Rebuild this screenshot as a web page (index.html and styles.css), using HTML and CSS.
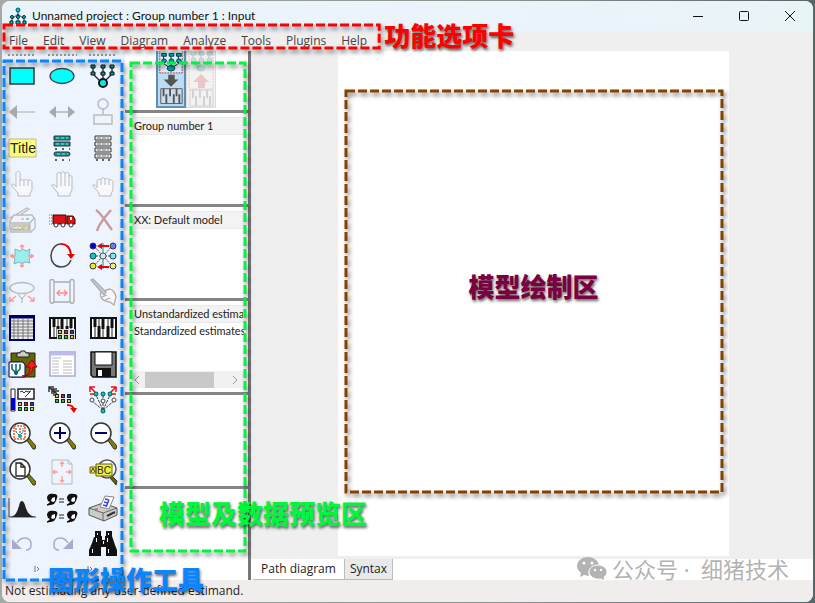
FILE: index.html
```
<!DOCTYPE html>
<html lang="en">
<head>
    <meta charset="utf-8">
    <title>Unnamed project : Group number 1 : Input</title>
    <link rel="stylesheet" href="styles.css">
</head>
<body>
    <!-- shared icon parts -->
    <svg class="sprite" aria-hidden="true">
        <symbol id="net" viewBox="0 0 28 28">
            <path d="M4 4v8l8 8M14 4v14M23 4v8l-8 8" fill="none" stroke="#222" stroke-width="1.3"/>
            <g fill="#099" stroke="#111"><path d="M2 3h4v3H2zM12 3h4v3h-4zM21 3h4v3h-4zM2 10h4v3H2zM12 10h4v3h-4zM21 10h4v3h-4z"/></g>
            <circle cx="14" cy="21" r="4" fill="#0ee" stroke="#111" stroke-width="2"/>
        </symbol>
        <symbol id="keys" viewBox="0 0 28 28">
            <path d="M2 4h25v20H2z" fill="#fff" stroke="#111" stroke-width="2"/>
            <path d="M6 4v20M10 4v20M14 4v20M19 4v20M23 4v20" stroke="#222"/>
            <path d="M6 4v9M10 12v11M14 4v11M19 12v11M23 4v10" stroke="#111" stroke-width="3"/>
        </symbol>
        <symbol id="lens" viewBox="0 0 28 28">
            <path d="M18 17l2-2 8 9-1 3h-2z" fill="#808000" stroke="#333"/>
            <circle cx="12" cy="11" r="10" fill="#fff" stroke="#333" stroke-width="1.5"/>
        </symbol>
        <symbol id="chips" viewBox="0 0 16 9">
            <path d="M0 0h4v4H0zM6 0h4v4H6zM12 0h4v4h-4zM0 5h4v4H0zM6 5h4v4H6zM12 5h4v4h-4z" fill="#222"/>
            <path d="M1 1h2v2H1zM13 6h2v2h-2z" fill="#dd0"/><path d="M7 1h2v2H7z" fill="#f11"/><path d="M13 1h2v2h-2z" fill="#33e"/><path d="M1 6h2v2H1zM7 6h2v2H7z" fill="#2c2"/>
        </symbol>
        <symbol id="face" viewBox="0 0 12 13">
            <path d="M1 5c0-4 4-5 7-4 3 0 4 2 3 4l-1 3-2 3-3 1-3-1 2-2-2-1z" fill="#111"/>
            <path d="M6 5l3-1v4L7 9 5 8z" fill="#fff"/><path d="M1 12l4-1" stroke="#111" stroke-width="1.5"/>
        </symbol>
    </svg>

    <div class="window">
        <header class="titlebar">
            <svg class="app-icon" viewBox="0 0 18 18">
                <path d="M9 4v10M9 7L3 12v3M9 7l6 5v3" fill="none" stroke="#246" stroke-width="1"/>
                <circle cx="9" cy="3" r="2" fill="#0cc" stroke="#056"/>
                <g fill="#0cc" stroke="#023"><circle cx="3" cy="10" r="1.5"/><circle cx="9" cy="10" r="1.5"/><circle cx="15" cy="10" r="1.5"/><path d="M1 14h3v3H1zM7 14h4v3H7zM14 14h3v3h-3z"/></g>
            </svg>
            <h1 class="title">Unnamed project : Group number 1 : Input</h1>
            <div class="window-controls">
                <button aria-label="Minimize"><svg viewBox="0 0 12 12"><path d="M1 6.500h10"/></svg></button>
                <button aria-label="Maximize"><svg viewBox="0 0 12 12"><rect x="1.500" y="1.500" width="9" height="9" rx="1"/></svg></button>
                <button aria-label="Close"><svg viewBox="0 0 12 12"><path d="M1 1l10 10M11 1L1 11"/></svg></button>
            </div>
        </header>

        <div class="menubar">
            <nav class="menu">
                <button>File</button>
                <button>Edit</button>
                <button>View</button>
                <button>Diagram</button>
                <button>Analyze</button>
                <button>Tools</button>
                <button>Plugins</button>
                <button>Help</button>
                <svg class="mark mark-menu"><rect width="100%" height="100%"/></svg>
                <span class="note note-menu" lang="zh">功能选项卡</span>
            </nav>
        </div>

        <main class="workspace">
            <section class="tools">
                <div class="grips"><i></i><i></i><i></i></div>
                <div class="tool-grid">
                    <button aria-label="Observed variable"><svg viewBox="0 0 28 28"><path d="M2 6h24v16H2z" fill="#0ff" stroke="#333" stroke-width="1.500"/></svg></button>
                    <button aria-label="Unobserved variable"><svg viewBox="0 0 28 28"><ellipse cx="14" cy="14" rx="12" ry="7.500" fill="#0ff" stroke="#444" stroke-width="1.300"/></svg></button>
                    <button aria-label="Latent variable"><svg><use href="#net"/></svg></button>

                    <button aria-label="Path"><svg viewBox="0 0 28 28"><path d="M8 14h19" stroke="#aaa"/><path d="M1 14l8-7v14z" fill="#aaa"/></svg></button>
                    <button aria-label="Covariance"><svg viewBox="0 0 28 28"><path d="M7 14h14" stroke="#999"/><path d="M1 14l7-6v12zM27 14l-7-6v12z" fill="#aaa"/></svg></button>
                    <button aria-label="Unique variable"><svg viewBox="0 0 28 28" fill="none" stroke="#bbb" stroke-width="1.500"><circle cx="14" cy="6" r="5"/><path d="M14 11v6M5 17h18v9H5z"/></svg></button>

                    <button aria-label="Figure captions"><svg viewBox="0 0 28 28"><path d="M1 5h27v18H1z" fill="#ff7" stroke="#bb9"/><text x="2" y="19" font-size="14" fill="#222">Title</text></svg></button>
                    <button aria-label="Variables in model"><svg viewBox="0 0 28 28"><g fill="#099" stroke="#333"><path d="M6 2h16v4H6zM6 8h16v4H6z"/><rect x="6" y="18" width="16" height="4" rx="2"/></g><path d="M8 4h12M8 10h12M9 20h11" stroke="#9dd" stroke-dasharray="3 2"/><path d="M7 15h15M7 26h15" stroke="#333" stroke-width="1.500" stroke-dasharray="2 5"/></svg></button>
                    <button aria-label="Variables in data set"><svg viewBox="0 0 28 28"><path d="M6 2h16v4H6zM6 8h16v4H6zM6 14h16v4H6zM6 20h16v4H6z" fill="#eee" stroke="#333"/><path d="M8 4h12M8 10h12M8 16h12M8 22h12" stroke="#777" stroke-dasharray="4 1"/><path d="M7 26h15" stroke="#333" stroke-width="1.500" stroke-dasharray="2 4"/></svg></button>

                    <button aria-label="Select one"><svg viewBox="0 0 28 28" class="hand"><path d="M8 17V3c0-2 4-2 4 0v8c0-2 4-2 4 0 0-2 4-2 4 0 0-2 4-1 4 1v8l-2 4v2H10v-3l-6-7c-1-2 1-3 4 0M12 11v5M16 11v5M20 11v5"/></svg></button>
                    <button aria-label="Select all"><svg viewBox="0 0 28 28" class="hand"><path d="M9 18V4c0-2 4-2 4 0 0-3 4-3 4 0 0-2 4-2 4 0v2c2-1 3 0 3 2v12l-2 4v2H10v-3l-6-7c-1-2 2-2 5 1M13 4v12M17 4v12M21 5v11"/></svg></button>
                    <button aria-label="Deselect all"><svg viewBox="0 0 28 28" class="hand"><path d="M8 18v-7c0-2 4-2 4-1 0-3 4-3 4 0 0-2 4-2 4 0 0-1 4 0 4 2v8l-2 4v2H10v-3l-6-7c-1-2 1-2 4 1M12 10v5M16 10v5M20 10v5"/></svg></button>

                    <button aria-label="Duplicate"><svg viewBox="0 0 28 28" fill="none" stroke="#bbb" stroke-width="1.300"><path d="M2 12L19 2l2 1-9 6M2 15l4-6h18l3 4v9l-4 4H3l-1-4zM2 17h20l4-5M22 17v8"/><path d="M4 19h17v5H4z" fill="#eed"/><text x="5" y="24" font-size="6" fill="#996" stroke="none">COPY</text><path d="M13 13h3" stroke="#faa"/><path d="M18 13h3" stroke="#6c9"/></svg></button>
                    <button aria-label="Move"><svg viewBox="0 0 28 28"><path d="M5 9h13v9H5zM19 10h6l2 3v5h-8z" fill="#d11" stroke="#400"/><path d="M1 9h3M1 12h3M1 15h3M1 18h3" stroke="#c44" stroke-dasharray="1 1"/><g fill="#fff" stroke="#333"><circle cx="8" cy="19" r="2"/><circle cx="15" cy="19" r="2"/><circle cx="23" cy="19" r="2"/></g><path d="M22 11h2v3h-2z" fill="#fff"/></svg></button>
                    <button aria-label="Erase"><svg viewBox="0 0 28 28" fill="none" stroke="#c99ba0"><path d="M7 4c5 3 10 12 16 20" stroke-width="2.500"/><path d="M22 4C17 10 10 17 8 25" stroke-width="2.500"/></svg></button>

                    <button aria-label="Change shape"><svg viewBox="0 0 28 28"><path d="M7 7l5 2 3-2 3 2 4-2-1 5 2 3-2 2 1 4-5-1-3 2-3-2-5 2 1-5-2-2 2-2z" fill="#9ee" stroke="#7bb"/><g stroke="#f99" stroke-width="1.500" fill="none"><path d="M14 8V3M12 5l2-2 2 2M14 20v5M12 23l2 2 2-2M8 14H2M5 12l-2 2 2 2M20 14h6M23 12l2 2-2 2"/></g></svg></button>
                    <button aria-label="Rotate"><svg viewBox="0 0 28 28" fill="none" stroke-width="1.500"><path d="M23 18c-2 5-5 7-10 7-6 0-10-5-10-11S7 2 13 2" stroke="#444"/><path d="M13 2c6 0 9 4 10 10" stroke="#e00" stroke-width="2"/><path d="M19 12h8l-4 5z" fill="#e00"/></svg></button>
                    <button aria-label="Reflect"><svg viewBox="0 0 28 28"><path d="M4 3l20 22M4 25L24 3M4 14h20" stroke="#555" stroke-dasharray="2 1"/><path d="M14 1v26" stroke="#099"/><path d="M20 4h-8M20 25h-8" stroke="#e00" stroke-width="2"/><path d="M8 4l5-3v6zM8 25l5-3v6z" fill="#e00"/><circle cx="14" cy="14" r="3" fill="#cee" stroke="#555"/><g stroke="#335"><circle cx="4" cy="4" r="3" fill="#00d"/><circle cx="4" cy="14" r="3" fill="#0cc"/><circle cx="4" cy="24" r="3" fill="#ee0"/><circle cx="24" cy="4" r="3" fill="#77e"/><circle cx="24" cy="14" r="3" fill="#7ee"/><circle cx="24" cy="24" r="3" fill="#ee7"/></g></svg></button>

                    <button aria-label="Move parameter"><svg viewBox="0 0 28 28" fill="none"><ellipse cx="14" cy="10" rx="12" ry="5.500" stroke="#bbb" stroke-width="1.300"/><path d="M10 16l4 5 4-5M14 21v4" stroke="#aaa"/><path d="M8 18l-6 5M2 19v4h4M20 18l6 5M26 19v4h-4" stroke="#f99" stroke-width="1.300"/></svg></button>
                    <button aria-label="Reposition diagram"><svg viewBox="0 0 28 28" fill="none" stroke="#aaa" stroke-width="1.300"><path d="M6 4h16M5 24h18M2 3c0-2 4-2 4 0v20c0 3-4 3-4 0zM22 3c0-2 4-2 4 0v20c0 3-4 3-4 0z"/><path d="M10 15h8M12 12l-3 3 3 3M16 12l3 3-3 3" stroke="#f88"/></svg></button>
                    <button aria-label="Touch up"><svg viewBox="0 0 28 28" stroke="#aaa" stroke-width="1.300"><path d="M12 14c-2 3 0 7 4 9l5 1 4 3 2-8c0-3-3-7-6-8l-4 1z" fill="#f8f8fa"/><path d="M2 2l2-1 13 13-2 3z" fill="#ccc"/><path d="M13 19l5-2M16 22l5-2" fill="none"/></svg></button>

                    <button aria-label="Select data files"><svg viewBox="0 0 28 28"><path d="M2 2h24v24H2z" fill="#eee" stroke="#006" stroke-width="2"/><path d="M1 3h26" stroke="#006" stroke-width="3"/><path d="M3 7h22M3 10h22M3 13h22M3 16h22M3 19h22M3 22h22M6 5v20M10 5v20M15 5v20M20 5v20" stroke="#777"/></svg></button>
                    <button aria-label="Analysis properties"><svg viewBox="0 0 28 28"><use href="#keys" width="28" height="28"/><path d="M9 15h18v11H9z" fill="#ddd"/><use href="#chips" x="10" y="16" width="16" height="9"/></svg></button>
                    <button aria-label="Calculate estimates"><svg><use href="#keys"/></svg></button>

                    <button aria-label="Copy diagram"><svg viewBox="0 0 28 28"><path d="M3 3h24v24H3z" fill="#660" stroke="#222"/><path d="M9 3h3l1-2h4l1 2h3v4H9z" fill="#ccc" stroke="#222"/><path d="M1 12h14l2 3v12H1z" fill="#fff" stroke="#006"/><path d="M4 14v5l4 4 4-4v-5M8 14v8" fill="none" stroke="#066" stroke-width="1.500"/><circle cx="8" cy="23" r="2" fill="#066"/><path d="M14 26c6 0 8-3 8-9h-4l6-7 5 7h-4c0 6-4 10-11 9z" fill="#e22" stroke="#900"/></svg></button>
                    <button aria-label="View text"><svg viewBox="0 0 28 28"><path d="M2 2h25v24H2z" fill="#fff" stroke="#aac" stroke-width="1.500"/><path d="M3 4h23" stroke="#bbe" stroke-width="3"/><path d="M4 8h9M4 11h7M15 11h9M4 14h7M15 14h9M4 17h7M15 17h9M4 20h7M15 20h9M4 23h7M15 23h9" stroke="#bbb"/></svg></button>
                    <button aria-label="Save"><svg viewBox="0 0 28 28"><path d="M2 2h25v25H4l-2-2z" fill="#777" stroke="#111" stroke-width="1.500"/><path d="M6 2h17v13H6z" fill="#fff" stroke="#111"/><path d="M7 18h15v9H7z" fill="#111"/><path d="M9 20h4v6H9z" fill="#fff"/></svg></button>

                    <button aria-label="Object properties"><svg viewBox="0 0 28 28"><path d="M3 3h4v22H3z" fill="#fff" stroke="#222"/><path d="M3 12h4v12H3z" fill="#00d"/><path d="M10 3h16v10H10z" fill="#fff" stroke="#222" stroke-width="1.500"/><path d="M12 6l2-1 2 2 2-2 2 1 3-1M17 11l5-5" fill="none" stroke="#333"/><use href="#chips" x="10" y="16" width="16" height="9"/></svg></button>
                    <button aria-label="Drag properties"><svg viewBox="0 0 28 28"><path d="M1 6V1h5M4 8V3h5M6 10V5h5M1 1l5 5M4 3l5 5" fill="none" stroke="#333" stroke-width="1.500"/><use href="#chips" x="7" y="8" width="16" height="9"/><path d="M19 19c4 0 7 2 7 5" fill="none" stroke="#e00" stroke-width="2"/><path d="M22 22h7l-3 5z" fill="#e00"/></svg></button>
                    <button aria-label="Preserve symmetries"><svg viewBox="0 0 28 28"><path d="M14 24L3 15M14 24L7 9M14 24V9M14 24l7-15M14 24l11-9" stroke="#444" stroke-dasharray="3 1"/><g fill="#fff" stroke="#444"><circle cx="3" cy="14" r="2"/><circle cx="14" cy="15" r="2"/><circle cx="25" cy="14" r="2"/></g><g fill="#0cc" stroke="#055"><circle cx="7" cy="8" r="2"/><circle cx="14" cy="8" r="2"/><circle cx="21" cy="8" r="2"/><circle cx="14" cy="25" r="2"/></g><path d="M6 6L1 1M1 6V1h5M22 6l5-5M22 1h5v5M1 8h4M23 8h4" fill="none" stroke="#e11" stroke-width="1.500"/></svg></button>

                    <button aria-label="Zoom area"><svg viewBox="0 0 28 28"><use href="#lens" width="28" height="28"/><path d="M6 4h11v13H6z" fill="#fff" stroke="#e52" stroke-width="1.500" stroke-dasharray="2 1"/><path d="M8 6v4l4 4 3-4V6M12 6v8" fill="none" stroke="#333" stroke-dasharray="2 1"/><circle cx="12" cy="14" r="2" fill="#0aa"/></svg></button>
                    <button aria-label="Zoom in"><svg viewBox="0 0 28 28"><use href="#lens" width="28" height="28"/><path d="M6 11h12M12 5v12" stroke="#006" stroke-width="2"/></svg></button>
                    <button aria-label="Zoom out"><svg viewBox="0 0 28 28"><use href="#lens" width="28" height="28"/><path d="M6 11h12" stroke="#006" stroke-width="2"/></svg></button>

                    <button aria-label="Zoom page"><svg viewBox="0 0 28 28"><use href="#lens" width="28" height="28"/><path d="M8 5h5l4 4v9H8zM13 5v4h4" fill="#fff" stroke="#222" stroke-width="1.300"/></svg></button>
                    <button aria-label="Fit page"><svg viewBox="0 0 28 28" fill="none"><path d="M4 2h16l4 4v20H4zM20 2v4h4" stroke="#bbb"/><path d="M14 9V4M12 6l2-2 2 2M14 18v6M12 22l2 2 2-2M10 14H5M7 12l-2 2 2 2M18 14h5M21 12l2 2-2 2" stroke="#f99" stroke-width="1.300"/></svg></button>
                    <button aria-label="Loupe"><svg viewBox="0 0 28 28"><path d="M21 20l2-2 5 5-1 4z" fill="#660" stroke="#333"/><circle cx="18" cy="11" r="9" fill="#fff" stroke="#555" stroke-width="1.500"/><path d="M1 9h6v6H1zM7 6h16v12H7z" fill="#ee4" stroke="#660"/><text x="8" y="16" font-size="10" fill="#222">BC</text><path d="M2 14l2-4 2 4" fill="none" stroke="#333"/></svg></button>

                    <button aria-label="Bayesian"><svg viewBox="0 0 28 28"><path d="M1 4v19h27" fill="none" stroke="#444"/><path d="M2 23c6-1 7-5 9-11 1-6 4-7 6-1 2 7 4 11 11 12z" fill="#222"/></svg></button>
                    <button aria-label="Multiple group analysis"><svg viewBox="0 0 28 28"><use href="#face" x="-2" y="-1" width="12" height="13"/><use href="#face" x="18" y="-1" width="12" height="13"/><use href="#face" x="-2" y="16" width="12" height="13"/><use href="#face" x="18" y="16" width="12" height="13"/><path d="M11 5h5M11 8h5M11 21h5M11 24h5" stroke="#222"/></svg></button>
                    <button aria-label="Print"><svg viewBox="0 0 28 28"><path d="M0 14l14-5 14 5v7l-13 6-15-6z" fill="#ccc" stroke="#555"/><path d="M0 14l14 5 14-5M14 19v8" fill="none" stroke="#666"/><path d="M11 13l5-11 9 1-5 12z" fill="#fff" stroke="#888"/><path d="M16 5l4 1M15 8l4 1M14 11l4 1M20 6l-3 7" stroke="#44d" stroke-width="1.500"/><path d="M6 15h3" stroke="#c33"/><path d="M18 22l8-4" stroke="#333" stroke-width="2"/></svg></button>

                    <button aria-label="Undo"><svg viewBox="0 0 28 28"><path d="M9 13c4-7 15-7 14 2 0 3-2 5-5 5" fill="none" stroke="#aac" stroke-width="1.500"/><path d="M4 9v10h10z" fill="#aac"/></svg></button>
                    <button aria-label="Redo"><svg viewBox="0 0 28 28"><path d="M20 13C16 6 5 6 6 15c0 3 2 5 5 5" fill="none" stroke="#aac" stroke-width="1.500"/><path d="M25 9v10H15z" fill="#aac"/></svg></button>
                    <button aria-label="Search"><svg viewBox="0 0 28 28"><path d="M6 1h6v5h1v4h3V6h1V1h6v5l3 9 2 5v6H17v-9h-5v9H0v-6l3-7 2-6h1z" fill="#111"/><path d="M8 3h1v2H8zM19 3h1v2h-1zM7 8h1v4H7zM18 8h1v4h-1zM3 19h1v4H3zM19 19h1v4h-1zM14 11h1v3h-1z" fill="#fff"/></svg></button>
                </div>
                <div class="more" aria-hidden="true"><svg viewBox="0 0 6 6"><path d="M1 0v6M3 1l2 2-2 2"/></svg><svg viewBox="0 0 6 6"><path d="M1 0v6M3 1l2 2-2 2"/></svg></div>
                <svg class="mark mark-tools"><rect width="100%" height="100%"/></svg>
                <span class="note note-tools" lang="zh">图形操作工具</span>
            </section>

            <section class="panels">
                <div class="view-switch">
                    <button class="active" aria-label="Input path diagram"><svg viewBox="0 0 28 56">
                        <path d="M2 -6h24v28H2z" fill="#def" stroke="#a33" stroke-dasharray="2 1"/>
                        <path d="M6 2v10l8 5 8-5V2M14 2v14" fill="none" stroke="#222"/>
                        <g fill="#0aa" stroke="#033"><path d="M4 1h5v3H4zM12 1h5v3h-5zM20 1h5v3h-5z"/><rect x="4" y="7" width="5" height="4" rx="2"/><rect x="12" y="7" width="5" height="4" rx="2"/><rect x="20" y="7" width="5" height="4" rx="2"/><ellipse cx="14" cy="17" rx="4" ry="3"/></g>
                        <path d="M11 24h7v5h4l-8 8-8-8h5z" fill="#555"/>
                        <path d="M3 39h23v16H3z" fill="#cde" stroke="#555"/><path d="M6 39v8M9 45v10M13 39v8M17 45v10M20 39v8M23 45v10" stroke="#555" stroke-width="2"/>
                    </svg></button>
                    <button aria-label="Output path diagram" disabled><svg viewBox="0 0 28 56">
                        <path d="M2 -6h24v44H2z" fill="none" stroke="#a33" stroke-dasharray="2 1"/>
                        <path d="M6 2v10l8 5 8-5V2M14 2v14" fill="none" stroke="#222"/>
                        <g fill="#0aa" stroke="#033"><path d="M4 1h5v3H4zM12 1h5v3h-5zM20 1h5v3h-5z"/><rect x="4" y="7" width="5" height="4" rx="2"/><rect x="12" y="7" width="5" height="4" rx="2"/><rect x="20" y="7" width="5" height="4" rx="2"/><ellipse cx="14" cy="17" rx="4" ry="3"/></g>
                        <path d="M11 37h7v-6h4l-8-8-8 8h5z" fill="#c22"/>
                        <path d="M3 39h23v16H3z" fill="none" stroke="#555"/><path d="M6 39v8M9 45v10M13 39v8M17 45v10M20 39v8M23 45v10" stroke="#555" stroke-width="2"/>
                    </svg></button>
                </div>
                <ul class="pane">
                    <li class="selected">Group number 1</li>
                </ul>
                <ul class="pane">
                    <li class="selected">XX: Default model</li>
                </ul>
                <ul class="pane">
                    <li class="selected">Unstandardized estimates</li>
                    <li>Standardized estimates</li>
                    <li class="scrollbar" aria-hidden="true">
                        <svg viewBox="0 0 6 10"><path d="M5 1L1 5l4 4"/></svg>
                        <span class="thumb"></span>
                        <svg viewBox="0 0 6 10"><path d="M1 1l4 4-4 4"/></svg>
                    </li>
                </ul>
                <ul class="pane"></ul>
                <ul class="pane"></ul>
                <svg class="mark mark-panels"><rect width="100%" height="100%"/></svg>
                <span class="note note-panels" lang="zh">模型及数据预览区</span>
            </section>

            <section class="drawing">
                <div class="canvas">
                    <svg class="mark mark-canvas"><rect width="100%" height="100%"/></svg>
                    <span class="note note-canvas" lang="zh">模型绘制区</span>
                </div>
                <div class="tabs">
                    <button class="active">Path diagram</button>
                    <button>Syntax</button>
                    <div class="watermark" lang="zh">
                        <svg viewBox="0 0 32 26">
                            <path d="M12 1C6 1 1 5 1 10c0 3 2 5 4 7l-1 4 4-2 5 1c-2-7 3-11 10-11-1-5-6-8-11-8z" fill="#b3b3b3"/>
                            <path d="M22 9c5 0 9 3 9 7 0 2-1 4-3 5l1 4-4-2c-7 1-12-3-12-7s4-7 9-7z" fill="#b3b3b3" stroke="#fff"/>
                            <g fill="#fff"><circle cx="8" cy="7" r="1.500"/><circle cx="16" cy="7" r="1.500"/><circle cx="19" cy="14" r="1.200"/><circle cx="25" cy="14" r="1.200"/></g>
                        </svg>
                        <span>公众号 ·&nbsp; 细猪技术</span>
                    </div>
                </div>
            </section>
        </main>

        <footer class="statusbar">Not estimating any user-defined estimand.</footer>
    </div>
</body>
</html>
```
FILE: styles.css
```
* {
    margin: 0;
    padding: 0;
    box-sizing: border-box;
}

body {
    min-height: 100vh;
    display: flex;
    padding: 1px 2px;
    background: linear-gradient(90deg, #a5aaa7, #8c9590 60%, #56676a);
    font-family: "Open Sans", "Noto Sans", "Noto Sans CJK SC", sans-serif;
    font-size: 12px;
    color: #222;
}

button {
    border: none;
    background: none;
    font: inherit;
    color: inherit;
}

.sprite {
    position: absolute;
    width: 0;
    height: 0;
}

.window {
    flex: 1;
    display: flex;
    flex-direction: column;
    background: #efefef;
    border-radius: 8px;
    overflow: hidden;
}

/* title bar */
.titlebar {
    height: 30px;
    display: flex;
    align-items: center;
    padding-left: 7px;
    background: linear-gradient(90deg, #e9f4f9, #ecf3fc 50%, #e9f4f7);
}

.app-icon {
    width: 18px;
    height: 18px;
    margin-right: 5px;
}

.title {
    flex: 1;
    font-family: Lato, sans-serif;
    font-size: 12px;
    font-weight: 400;
    line-height: 16px;
    color: #111;
}

.window-controls {
    display: flex;
}

.window-controls button {
    width: 46px;
    height: 30px;
    display: flex;
    align-items: center;
    justify-content: center;
}

.window-controls svg {
    width: 12px;
    height: 12px;
    fill: none;
    stroke: #111;
}

/* menu */
.menubar {
    display: flex;
    height: 20px;
}

.menu {
    position: relative;
    display: flex;
    gap: 15px;
    padding: 0 10px 0 7px;
    line-height: 16px;
    color: #444;
}

/* workspace */
.workspace {
    flex: 1;
    display: flex;
}

.tools {
    position: relative;
    width: 123px;
    background: #edf4fd;
}

.grips {
    display: grid;
    grid-template-columns: repeat(3, 1fr);
    padding: 3px 2px 4px 0;
}

.grips i {
    height: 2px;
    margin: 0 6px;
    background: repeating-linear-gradient(90deg, #999 0 2px, transparent 2px 4px);
}

.tool-grid {
    display: grid;
    grid-template-columns: repeat(3, 1fr);
    grid-auto-rows: 36px;
    margin: -2px 2px 0 0;
}

.tool-grid button {
    display: flex;
    align-items: center;
    justify-content: center;
}

.tool-grid svg {
    width: 28px;
    height: 28px;
    overflow: visible;
    font-family: "Liberation Sans", sans-serif;
}

.tool-grid .hand {
    fill: #f6f8fc;
    stroke: #bbb;
}

.more {
    display: flex;
    justify-content: space-around;
    padding: 4px 8px 0 8px;
}

.more svg {
    width: 6px;
    height: 6px;
    fill: none;
    stroke: #777;
}

/* list panels */
.panels {
    position: relative;
    width: 126px;
    display: flex;
    flex-direction: column;
    background: #fff;
    border-right: 3px solid #777;
}

.view-switch {
    display: flex;
    justify-content: center;
    padding: 0 2px 2px 0;
    border-bottom: 3px solid #858585;
}

.view-switch button {
    width: 30px;
    height: 57px;
    border: 1px solid #ddd;
    border-top: none;
    background: #f2f2f2;
}

.view-switch button.active {
    background: #bcdcf4;
    border: 2px solid #5e8fb5;
    border-top: none;
}

.view-switch button:disabled svg {
    opacity: 0.2;
}

.view-switch svg {
    display: block;
    width: 100%;
    height: 100%;
}

.pane {
    min-height: 94px;
    display: flex;
    flex-direction: column;
    padding: 4px 4px 0 8px;
    border-bottom: 3px solid #858585;
    list-style: none;
    font-family: Lato, sans-serif;
    font-size: 11px;
    line-height: 16px;
}

.pane:nth-of-type(5) {
    min-height: 0;
    flex: 1;
    border-bottom: none;
}

.pane li {
    overflow: hidden;
    white-space: nowrap;
    padding-left: 1px;
}

.pane .selected {
    background: #f3f3f3;
    border: 1px solid #eaeaea;
    border-left: none;
}

.pane .scrollbar {
    display: flex;
    align-items: center;
    margin-top: auto;
    margin-bottom: 4px;
    padding: 0 6px 0 1px;
    height: 17px;
    background: #f1f1f1;
}

.scrollbar svg {
    width: 6px;
    height: 10px;
    fill: none;
    stroke: #999;
}

.scrollbar .thumb {
    flex: 1;
    height: 16px;
    margin: 0 18px 0 5px;
    background: #c9c9c9;
}

/* drawing area */
.drawing {
    flex: 1;
    display: flex;
    flex-direction: column;
}

.canvas {
    position: relative;
    flex: 1;
    display: flex;
    align-items: center;
    justify-content: center;
    margin: 0 84px 0 87px;
    background: #fff;
}

.tabs {
    position: relative;
    display: flex;
    margin-top: 3px;
    padding-left: 2px;
    background: #fff;
    font-size: 12px;
    line-height: 20px;
}

.tabs button {
    padding: 0 5px;
    border-right: 1px solid #bbb;
    border-bottom: 1px solid #bbb;
    background: #e9e9e9;
}

.tabs button.active {
    padding: 0 8px;
    background: #fff;
}

.watermark {
    position: absolute;
    right: 24px;
    top: -5px;
    display: flex;
    align-items: center;
    gap: 4px;
    font-family: "Noto Sans", "Noto Sans CJK SC", sans-serif;
    font-size: 22px;
    line-height: 30px;
    color: #b3b3b3;
}

.watermark svg {
    width: 32px;
    height: 26px;
}

.statusbar {
    height: 22px;
    padding-left: 3px;
    background: #f1edec;
    line-height: 22px;
}

/* dashed frames and their labels, laid over the window */
.mark {
    position: absolute;
    overflow: visible;
    pointer-events: none;
    fill: none;
    stroke-width: 3px;
    stroke-dasharray: 9 3;
    filter: drop-shadow(2px 3px 2px rgba(0, 0, 0, 0.5));
}

.note {
    position: absolute;
    z-index: 2;
    white-space: nowrap;
    font-family: "Noto Sans CJK SC", sans-serif;
    font-size: 26px;
    font-weight: 900;
    line-height: 30px;
    text-shadow: 1px 2px 3px rgba(0, 0, 0, 0.6);
}

.mark-menu {
    left: 2px;
    top: -6px;
    width: 100%;
    height: 23px;
    stroke: #f00;
    z-index: 2;
}

.note-menu {
    left: 100%;
    top: -11px;
    margin-left: 7px;
    color: #f00;
}

.mark-tools {
    left: 2px;
    top: 10px;
    width: calc(100% - 5px);
    height: calc(100% - 10px);
    stroke: #0a84ff;
    z-index: 1;
}

.note-tools {
    left: 46px;
    bottom: -14px;
    color: #0a84ff;
}

.mark-panels {
    left: 6px;
    top: 12px;
    width: calc(100% - 9px);
    height: calc(100% - 41px);
    stroke: #00f53d;
}

.note-panels {
    left: 34px;
    bottom: 52px;
    color: #00f53d;
}

.mark-canvas {
    left: 8px;
    top: 40px;
    width: calc(100% - 15px);
    height: calc(100% - 104px);
    stroke: #844200;
}

.note-canvas {
    margin-bottom: 36px;
    color: #7b0040;
}
```
